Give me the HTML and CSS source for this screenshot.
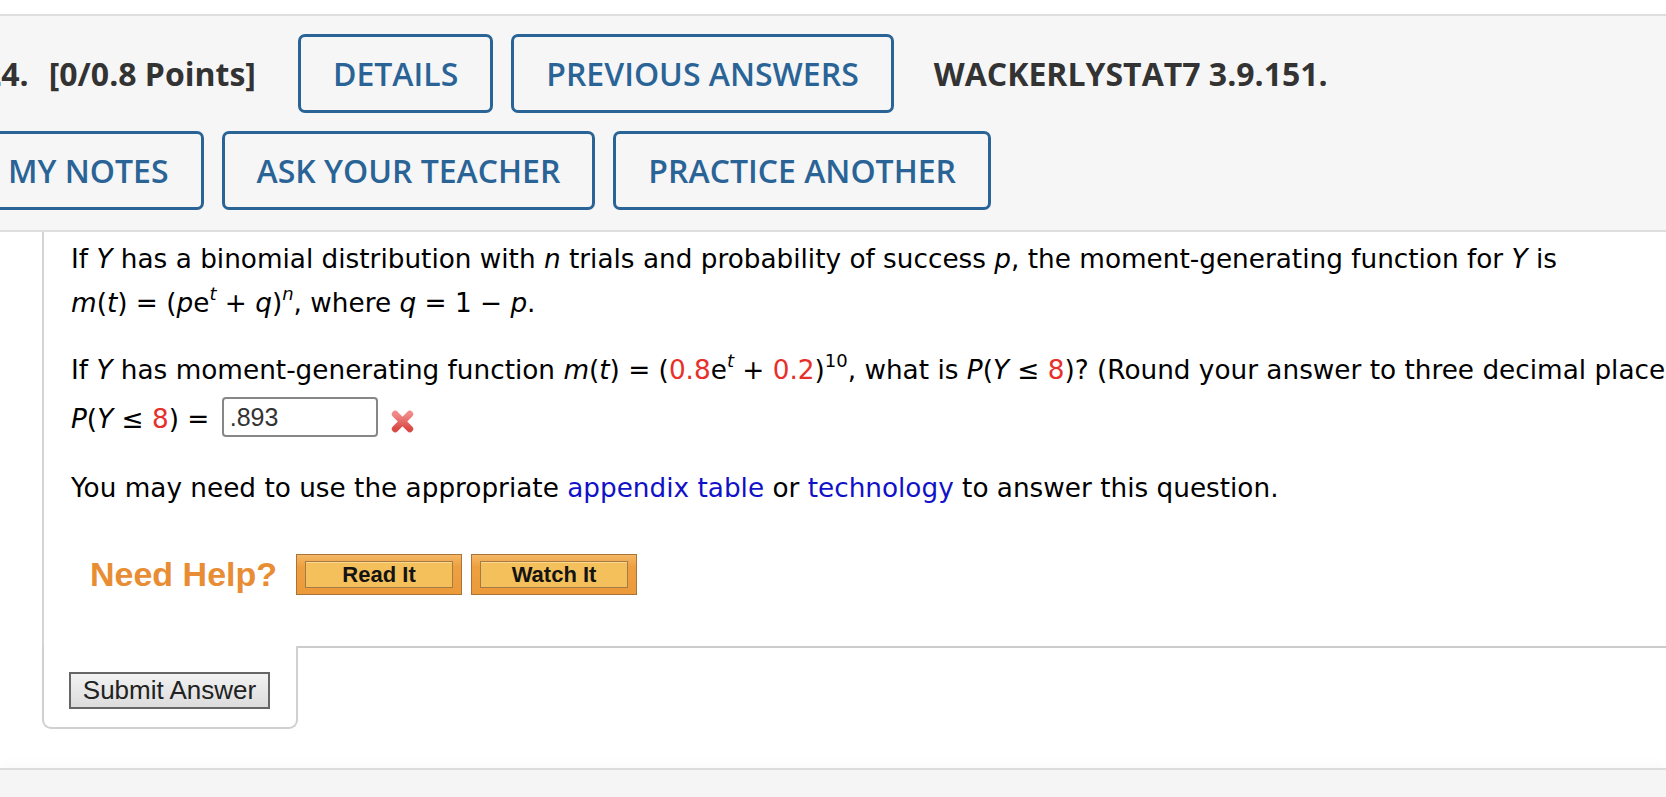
FILE: index.html
```html
<!DOCTYPE html>
<html>
<head>
<meta charset="utf-8">
<link rel="stylesheet" href="styles.css">
</head>
<body>
<div class="topgap"></div>
<header class="qheader">
  <div class="hrow hrow1">
    <span class="qnum">24.</span>
    <span class="qpoints">[0/0.8 Points]</span>
    <a class="hbtn">DETAILS</a>
    <a class="hbtn">PREVIOUS ANSWERS</a>
    <span class="qref">WACKERLYSTAT7 3.9.151.</span>
  </div>
  <div class="hrow hrow2">
    <a class="hbtn">MY NOTES</a>
    <a class="hbtn">ASK YOUR TEACHER</a>
    <a class="hbtn">PRACTICE ANOTHER</a>
  </div>
</header>
<main class="qbody">
  <section class="panel">
    <p class="txt">If <i>Y</i> has a binomial distribution with <i>n</i> trials and probability of success <i>p</i>, the moment-generating function for <i>Y</i> is<br><i>m</i>(<i>t</i>) = (<i>p</i>e<sup><i>t</i></sup> + <i>q</i>)<sup><i>n</i></sup>, where <i>q</i> = 1 − <i>p</i>.</p>
    <p class="txt q2">If <i>Y</i> has moment-generating function <i>m</i>(<i>t</i>) = (<span class="red">0.8</span>e<sup><i>t</i></sup> + <span class="red">0.2</span>)<sup>10</sup>, what is <i>P</i>(<i>Y</i> ≤ <span class="red">8</span>)? (Round your answer to three decimal places.)</p>
    <div class="txt answer">
      <span class="alabel"><i>P</i>(<i>Y</i> ≤ <span class="red">8</span>) = </span>
      <span class="input">.893</span>
      <svg class="xmark" width="25" height="25" viewBox="0 0 24 24">
        <defs>
          <linearGradient id="xg" x1="0" y1="0" x2="0" y2="1">
            <stop offset="0" stop-color="#f08a88"/>
            <stop offset="1" stop-color="#d94a46"/>
          </linearGradient>
        </defs>
        <path d="M5 5 L19 19 M19 5 L5 19" stroke="url(#xg)" stroke-width="6.5" stroke-linecap="round" fill="none"/>
      </svg>
    </div>
    <p class="txt note">You may need to use the appropriate <a class="lnk">appendix table</a> or <a class="lnk">technology</a> to answer this question.</p>
    <div class="help">
      <span class="needhelp">Need Help?</span>
      <a class="hlpbtn"><span>Read It</span></a>
      <a class="hlpbtn"><span>Watch It</span></a>
    </div>
  </section>
  <div class="bottomrow">
    <div class="submittab"><button class="submit">Submit Answer</button></div>
    <div class="rest"></div>
  </div>
</main>
<footer class="foot"></footer>
</body>
</html>
```
FILE: styles.css
```css
html, body {
  margin: 0;
  padding: 0;
  background: #ffffff;
  overflow: hidden;
  width: 1666px;
  height: 797px;
}
.topgap {
  height: 14px;
}
.qheader {
  background: #f6f6f6;
  border-top: 2px solid #dedede;
  border-bottom: 2px solid #dedede;
  padding: 18px 0 20px 0;
  font-family: "Open Sans", sans-serif;
  overflow: hidden;
}
.hrow {
  display: flex;
  align-items: center;
  gap: 18px;
  white-space: nowrap;
}
.hrow1 {
  margin-left: -17px;
}
.hrow2 {
  margin-left: -27px;
  margin-top: 18px;
}
.qnum, .qpoints, .qref {
  font-weight: 700;
  font-size: 32px;
  color: #333333;
}
.qnum {
  margin-right: 2px;
}
.qpoints {
  margin-right: 24px;
}
.qref {
  margin-left: 22px;
}
.hbtn {
  box-sizing: border-box;
  height: 79px;
  display: inline-flex;
  align-items: center;
  padding: 0 32px;
  border: 3px solid #2a6497;
  border-radius: 7px;
  color: #2a6497;
  font-weight: 600;
  font-size: 32px;
  background: #f6f6f6;
}
.qbody {
  font-family: "DejaVu Sans", Verdana, sans-serif;
  color: #000;
}
.panel {
  margin-left: 42px;
  border-left: 2px solid #d4d4d4;
  padding: 5px 0 51px 27px;
}
.txt {
  margin: 0;
  font-size: 26.3px;
  line-height: 44px;
  white-space: nowrap;
}
.txt sup {
  font-size: 18px;
  line-height: 0;
  vertical-align: 12px;
}
.q2 {
  margin-top: 23px;
}
.red {
  color: #e8302a;
}
.answer {
  margin-top: 3px;
  display: flex;
  align-items: center;
  height: 44px;
}
.alabel {
  white-space: pre;
  padding-top: 4px;
}
.input {
  box-sizing: border-box;
  width: 156px;
  height: 40px;
  border: 2px solid #878787;
  border-radius: 4px;
  padding-left: 6px;
  font-family: "Liberation Sans", Arial, sans-serif;
  font-size: 25px;
  line-height: 36px;
  color: #333;
  margin-left: 4px;
}
.xmark {
  margin-left: 12px;
  margin-top: 8px;
}
.note {
  margin-top: 27px;
}
.lnk {
  color: #1111c8;
}
.help {
  margin-top: 44px;
  margin-left: 19px;
  display: flex;
  align-items: center;
  height: 41px;
}
.needhelp {
  font-family: "Liberation Sans", Arial, sans-serif;
  font-weight: 700;
  font-size: 34px;
  color: #e88d34;
  margin-right: 19px;
}
.hlpbtn {
  box-sizing: border-box;
  width: 166px;
  height: 41px;
  border: 1px solid #a8743a;
  background: linear-gradient(#f4b866, #eea040 30%, #ec9a3a);
  padding: 6px 8px 6px 8px;
  display: flex;
  margin-right: 9px;
}
.hlpbtn span {
  flex: 1;
  border: 1px solid #a47a48;
  background: #f4c05c;
  box-shadow: inset 0 1px 0 #fbd88c;
  display: flex;
  align-items: center;
  justify-content: center;
  font-family: "Liberation Sans", Arial, sans-serif;
  font-weight: 700;
  font-size: 22px;
  color: #141414;
}
.bottomrow {
  display: flex;
  align-items: flex-start;
}
.submittab {
  margin-left: 42px;
  width: 256px;
  box-sizing: border-box;
  border: 2px solid #d0d0d0;
  border-top: none;
  border-radius: 0 0 9px 9px;
  padding: 26px 0 18px 25px;
}
.submit {
  box-sizing: border-box;
  width: 201px;
  height: 37px;
  border: 2px solid #666;
  background: linear-gradient(#f2f2f2, #dcdcdc);
  font-family: "Liberation Sans", Arial, sans-serif;
  font-size: 26px;
  color: #222;
  padding: 0;
}
.rest {
  flex: 1;
  border-top: 2px solid #cccccc;
}
.foot {
  margin-top: 39px;
  height: 30px;
  border-top: 2px solid #dcdcdc;
  background: #f5f5f5;
  box-shadow: 0 -6px 8px rgba(0,0,0,0.02);
}
```
